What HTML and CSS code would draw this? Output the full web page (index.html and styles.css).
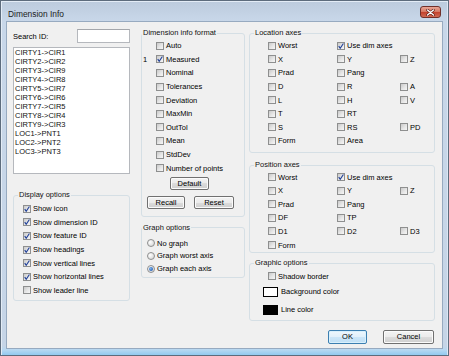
FILE: index.html
```html
<!DOCTYPE html>
<html>
<head>
  <meta charset="utf-8">
  <title>Dimension Info</title>
  <link rel="stylesheet" href="styles.css">
</head>
<body>
  <div class="window">
    <div class="titlebar">
      <span class="title">Dimension Info</span>
      <span class="close-btn">
        <svg width="9" height="7" viewBox="0 0 9 7">
          <path d="M1.5 1 L7.5 6 M7.5 1 L1.5 6" stroke="#5a1a14" stroke-width="2.6" stroke-linecap="round"/>
          <path d="M1.5 1 L7.5 6 M7.5 1 L1.5 6" stroke="#ffffff" stroke-width="1.4" stroke-linecap="round"/>
        </svg>
      </span>
    </div>

    <div class="client">
      <!-- left column: ids and display options -->
      <div class="col col-ids">
        <div class="search-row">
          <label for="searchId">Search ID:</label>
          <input type="text" id="searchId" class="search-box">
        </div>
        <ul class="id-list">
          <li>CIRTY1-&gt;CIR1</li>
          <li>CIRTY2-&gt;CIR2</li>
          <li>CIRTY3-&gt;CIR9</li>
          <li>CIRTY4-&gt;CIR8</li>
          <li>CIRTY5-&gt;CIR7</li>
          <li>CIRTY6-&gt;CIR6</li>
          <li>CIRTY7-&gt;CIR5</li>
          <li>CIRTY8-&gt;CIR4</li>
          <li>CIRTY9-&gt;CIR3</li>
          <li>LOC1-&gt;PNT1</li>
          <li>LOC2-&gt;PNT2</li>
          <li>LOC3-&gt;PNT3</li>
        </ul>
        <fieldset class="group group-display">
          <legend>Display options</legend>
          <div class="display-body">
            <div class="cb-row"><span class="cb"><svg class="tick" viewBox="0 0 6 6"><polyline points="0.7,3.2 2.2,5.2 5.4,0.5"/></svg></span>Show icon</div>
            <div class="cb-row"><span class="cb"><svg class="tick" viewBox="0 0 6 6"><polyline points="0.7,3.2 2.2,5.2 5.4,0.5"/></svg></span>Show dimension ID</div>
            <div class="cb-row"><span class="cb"><svg class="tick" viewBox="0 0 6 6"><polyline points="0.7,3.2 2.2,5.2 5.4,0.5"/></svg></span>Show feature ID</div>
            <div class="cb-row"><span class="cb"><svg class="tick" viewBox="0 0 6 6"><polyline points="0.7,3.2 2.2,5.2 5.4,0.5"/></svg></span>Show headings</div>
            <div class="cb-row"><span class="cb"><svg class="tick" viewBox="0 0 6 6"><polyline points="0.7,3.2 2.2,5.2 5.4,0.5"/></svg></span>Show vertical lines</div>
            <div class="cb-row"><span class="cb"><svg class="tick" viewBox="0 0 6 6"><polyline points="0.7,3.2 2.2,5.2 5.4,0.5"/></svg></span>Show horizontal lines</div>
            <div class="cb-row"><span class="cb"></span>Show leader line</div>
          </div>
        </fieldset>
      </div>

      <!-- middle column: format and graph -->
      <div class="col col-format">
        <fieldset class="group group-format">
          <legend>Dimension info format</legend>
          <div class="format-body">
            <div class="cb-row"><span class="num"></span><span class="cb"></span>Auto</div>
            <div class="cb-row"><span class="num">1</span><span class="cb"><svg class="tick" viewBox="0 0 6 6"><polyline points="0.7,3.2 2.2,5.2 5.4,0.5"/></svg></span>Measured</div>
            <div class="cb-row"><span class="num"></span><span class="cb"></span>Nominal</div>
            <div class="cb-row"><span class="num"></span><span class="cb"></span>Tolerances</div>
            <div class="cb-row"><span class="num"></span><span class="cb"></span>Deviation</div>
            <div class="cb-row"><span class="num"></span><span class="cb"></span>MaxMin</div>
            <div class="cb-row"><span class="num"></span><span class="cb"></span>OutTol</div>
            <div class="cb-row"><span class="num"></span><span class="cb"></span>Mean</div>
            <div class="cb-row"><span class="num"></span><span class="cb"></span>StdDev</div>
            <div class="cb-row"><span class="num"></span><span class="cb"></span>Number of points</div>
            <div class="btn-row btn-row-default"><button class="btn btn-default">Default</button></div>
            <div class="btn-row btn-row-pair"><button class="btn btn-recall">Recall</button><button class="btn btn-reset">Reset</button></div>
          </div>
        </fieldset>
        <fieldset class="group group-graph">
          <legend>Graph options</legend>
          <div class="graph-body">
            <div class="rb-row"><span class="rb"></span>No graph</div>
            <div class="rb-row"><span class="rb"></span>Graph worst axis</div>
            <div class="rb-row"><span class="rb selected"><span class="dot"></span></span>Graph each axis</div>
          </div>
        </fieldset>
      </div>

      <!-- right column: axes and graphic options -->
      <div class="col col-axes">
        <fieldset class="group group-axes">
          <legend>Location axes</legend>
          <div class="axes-grid location-grid">
            <div class="cell"><span class="cb"></span>Worst</div>
            <div class="cell"><span class="cb"><svg class="tick" viewBox="0 0 6 6"><polyline points="0.7,3.2 2.2,5.2 5.4,0.5"/></svg></span>Use dim axes</div>
            <div class="cell"></div>
            <div class="cell"><span class="cb"></span>X</div>
            <div class="cell"><span class="cb"></span>Y</div>
            <div class="cell"><span class="cb"></span>Z</div>
            <div class="cell"><span class="cb"></span>Prad</div>
            <div class="cell"><span class="cb"></span>Pang</div>
            <div class="cell"></div>
            <div class="cell"><span class="cb"></span>D</div>
            <div class="cell"><span class="cb"></span>R</div>
            <div class="cell"><span class="cb"></span>A</div>
            <div class="cell"><span class="cb"></span>L</div>
            <div class="cell"><span class="cb"></span>H</div>
            <div class="cell"><span class="cb"></span>V</div>
            <div class="cell"><span class="cb"></span>T</div>
            <div class="cell"><span class="cb"></span>RT</div>
            <div class="cell"></div>
            <div class="cell"><span class="cb"></span>S</div>
            <div class="cell"><span class="cb"></span>RS</div>
            <div class="cell"><span class="cb"></span>PD</div>
            <div class="cell"><span class="cb"></span>Form</div>
            <div class="cell"><span class="cb"></span>Area</div>
            <div class="cell"></div>
          </div>
        </fieldset>
        <fieldset class="group group-axes group-position">
          <legend>Position axes</legend>
          <div class="axes-grid position-grid">
            <div class="cell"><span class="cb"></span>Worst</div>
            <div class="cell"><span class="cb"><svg class="tick" viewBox="0 0 6 6"><polyline points="0.7,3.2 2.2,5.2 5.4,0.5"/></svg></span>Use dim axes</div>
            <div class="cell"></div>
            <div class="cell"><span class="cb"></span>X</div>
            <div class="cell"><span class="cb"></span>Y</div>
            <div class="cell"><span class="cb"></span>Z</div>
            <div class="cell"><span class="cb"></span>Prad</div>
            <div class="cell"><span class="cb"></span>Pang</div>
            <div class="cell"></div>
            <div class="cell"><span class="cb"></span>DF</div>
            <div class="cell"><span class="cb"></span>TP</div>
            <div class="cell"></div>
            <div class="cell"><span class="cb"></span>D1</div>
            <div class="cell"><span class="cb"></span>D2</div>
            <div class="cell"><span class="cb"></span>D3</div>
            <div class="cell"><span class="cb"></span>Form</div>
            <div class="cell"></div>
            <div class="cell"></div>
          </div>
        </fieldset>
        <fieldset class="group group-axes group-graphic">
          <legend>Graphic options</legend>
          <div class="graphic-body">
            <div class="cb-row shadow-row"><span class="cb"></span>Shadow border</div>
            <div class="color-row color-row-bg"><span class="swatch swatch-white"></span>Background color</div>
            <div class="color-row color-row-line"><span class="swatch swatch-black"></span>Line color</div>
          </div>
        </fieldset>
        <div class="dialog-buttons">
          <button class="btn btn-ok">OK</button>
          <button class="btn btn-cancel">Cancel</button>
        </div>
      </div>
    </div>
  </div>
</body>
</html>
```

FILE: styles.css
```css
body {
  margin: 0;
  font-family: "Liberation Sans", Arial, sans-serif;
  font-size: 7.5px;
  color: #000;
  background: #ffffff;
}

/* window frame */
.window {
  box-sizing: border-box;
  width: 449px;
  height: 356px;
  border: 1px solid #5d6c7d;
  padding: 0 5px 6px 5px;
  display: flex;
  flex-direction: column;
  background-color: #c6d5e7;
  background-image: linear-gradient(to bottom, #bccbdd 0, #c8d7e9 20px, #c6d5e7 345px, #b6d8f2 349px, #92caf0 100%);
  box-shadow: inset 1px 1px 0 #e3ecf6, inset -1px 0 0 #dbe7f4;
}

.titlebar {
  height: 20px;
  display: flex;
  justify-content: space-between;
  align-items: flex-start;
}

.title {
  margin: 8px 0 0 2px;
  font-size: 8.4px;
  line-height: 10px;
  color: #1b1b1b;
}

.close-btn {
  box-sizing: border-box;
  width: 21px;
  height: 12px;
  margin: 5px 2px 0 0;
  border: 1px solid #70302a;
  border-radius: 3px;
  background: linear-gradient(to bottom, #e8a696 0, #d77a66 45%, #c4442f 55%, #cf6a54 100%);
  display: flex;
  align-items: center;
  justify-content: center;
}

.client {
  flex: 1;
  box-sizing: border-box;
  border: 1px solid #97aac0;
  background: #f0f0f0;
  padding: 6px 7px 0 6px;
  display: flex;
  align-items: flex-start;
}

.col {
  display: flex;
  flex-direction: column;
}

.col-ids {
  width: 117px;
  margin-right: 11px;
}

.col-format {
  width: 104px;
  margin-right: 4px;
}

.col-axes {
  width: 186px;
}

/* search + list */
.search-row {
  display: flex;
  justify-content: space-between;
  align-items: center;
  height: 14px;
  margin-top: 1px;
}

.search-box {
  box-sizing: border-box;
  width: 53px;
  height: 14px;
  margin: 0;
  padding: 0;
  border: 1px solid #b5b8bd;
  border-top-color: #a3a6ab;
  background: #fff;
  font: inherit;
}

.id-list {
  list-style: none;
  box-sizing: border-box;
  height: 127px;
  margin: 4px 0 0 0;
  padding: 0 0 0 1px;
  border: 1px solid #b5b8bd;
  background: #fff;
}

.id-list li {
  height: 9px;
  line-height: 9px;
  color: #111;
}

/* group boxes */
.group {
  margin: 0;
  padding: 0;
  min-width: 0;
  border: 1px solid #d5dfe5;
  border-radius: 3px;
}

.group legend {
  padding: 0 1px;
  line-height: 10px;
  color: #111;
}

.group-display legend,
.group-axes legend {
  margin-left: 4px;
}

.group-display {
  margin-top: 16px;
}

.display-body {
  padding: 2px 0 3px 9px;
}

.format-body {
  padding: 1px 0 7px 0;
}

.group-graph {
  margin-top: 6px;
}

.graph-body {
  padding: 4px 0 2px 5px;
}

.group-position {
  margin-top: 7px;
}

.group-graphic {
  margin-top: 5px;
}

/* checkbox rows */
.cb-row {
  display: flex;
  align-items: center;
  height: 13.6px;
}

.cb {
  box-sizing: border-box;
  flex: none;
  width: 8px;
  height: 8px;
  margin-right: 2px;
  border: 1px solid #8e8f8f;
  background: linear-gradient(135deg, #c9c9c9 0, #e6e6e6 55%, #f6f6f6 100%);
  display: flex;
  align-items: center;
  justify-content: center;
}

.tick {
  width: 6px;
  height: 6px;
  overflow: visible;
}

.tick polyline {
  fill: none;
  stroke: #1f3f98;
  stroke-width: 1.1;
}

.num {
  box-sizing: border-box;
  flex: none;
  width: 14px;
  padding-left: 1px;
}

/* radio rows */
.rb-row {
  display: flex;
  align-items: center;
  height: 12.7px;
}

.rb {
  box-sizing: border-box;
  flex: none;
  width: 8px;
  height: 8px;
  margin-right: 2px;
  border: 1px solid #8e8f8f;
  border-radius: 50%;
  background: radial-gradient(circle at 35% 35%, #ffffff 0, #e2e2e2 60%, #cfcfcf 100%);
  display: flex;
  align-items: center;
  justify-content: center;
}

.rb .dot {
  width: 4px;
  height: 4px;
  border-radius: 50%;
  background: radial-gradient(circle at 40% 40%, #7fb6ef 0, #2a64b8 70%, #1d4f99 100%);
}

/* axes grids */
.axes-grid {
  display: grid;
  grid-template-columns: 69px 63px 1fr;
  grid-auto-rows: 13.6px;
  padding-left: 18px;
}

.location-grid {
  padding-top: 1px;
  padding-bottom: 4.5px;
}

.position-grid {
  padding-top: 0;
  padding-bottom: 0.5px;
}

.cell {
  display: flex;
  align-items: center;
}

/* graphic options */
.graphic-body {
  padding: 1px 0 5px 0;
}

.shadow-row {
  padding-left: 18px;
}

.color-row {
  display: flex;
  align-items: center;
  height: 10px;
  padding-left: 13px;
}

.color-row-bg {
  margin-top: 4px;
}

.color-row-line {
  margin-top: 8px;
}

.swatch {
  box-sizing: border-box;
  flex: none;
  width: 15px;
  height: 10px;
  margin-right: 3px;
  border: 1px solid #000;
}

.swatch-white {
  background: #fff;
}

.swatch-black {
  background: #000;
}

/* buttons */
.btn {
  box-sizing: border-box;
  height: 13px;
  margin: 0;
  padding: 0;
  font: inherit;
  color: #000;
  border: 1px solid #707070;
  border-radius: 2px;
  background: linear-gradient(to bottom, #f3f3f3 0, #ebebeb 50%, #dcdcdc 50%, #cfcfcf 100%);
  box-shadow: inset 0 0 0 1px #fbfbfb;
}

.btn-row {
  display: flex;
}

.btn-row-default {
  margin-top: 2px;
  padding-left: 28px;
}

.btn-row-pair {
  margin-top: 6px;
  padding-left: 5px;
  gap: 9px;
}

.btn-default {
  width: 39px;
}

.btn-recall {
  width: 38px;
}

.btn-reset {
  width: 40px;
}

.dialog-buttons {
  display: flex;
  justify-content: flex-end;
  gap: 16px;
  margin-top: 9px;
  margin-right: 1px;
}

.dialog-buttons .btn {
  height: 14px;
}

.btn-ok {
  width: 39px;
  border-color: #3c7fb1;
  background: linear-gradient(to bottom, #eef7fd 0, #e1f0fb 50%, #cce6f8 50%, #bfdff5 100%);
  box-shadow: inset 0 0 0 1px #d9f0fc;
}

.btn-cancel {
  width: 51px;
}
```
